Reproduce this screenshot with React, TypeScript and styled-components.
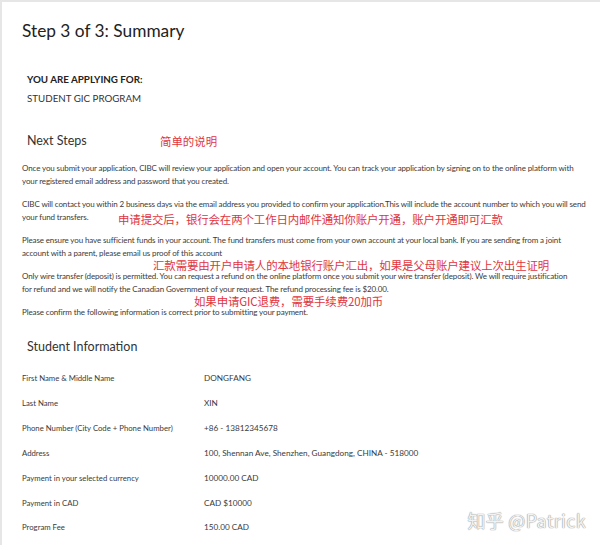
import styled, { createGlobalStyle } from "styled-components";

const GlobalStyle = createGlobalStyle`
  html, body {
    margin: 0;
    padding: 0;
    background: #ffffff;
  }
  body {
    font-family: Lato, "Noto Sans CJK SC", sans-serif;
    color: #3a3a3a;
  }
`;

const Page = styled.div`
  position: relative;
  width: 600px;
  height: 545px;
  box-sizing: border-box;
  overflow: hidden;
  border-top: 2px solid #e6e6e6;
  border-left: 2px solid #e6e6e6;
  padding: 15px 0 0 20px;
`;

const Title = styled.h1`
  margin: 0;
  font-size: 17.3px;
  font-weight: 400;
  line-height: 28px;
  color: #222;
`;

const Applying = styled.div`
  margin: 28px 0 0 5px;
  display: flex;
  flex-direction: column;
  gap: 7px;
`;

const ApplyingLabel = styled.div`
  font-size: 9.8px;
  font-weight: 700;
  line-height: 12px;
  color: #222;
`;

const ApplyingValue = styled.div`
  font-size: 9.75px;
  line-height: 12px;
  color: #333;
`;

const SectionHead = styled.div<{ $top: number }>`
  margin: ${(p) => p.$top}px 0 0 5px;
  display: grid;
  grid-template-columns: 133px auto;
  align-items: center;
  font-size: 12.5px;
  line-height: 20px;
  color: #333;
`;

const Note = styled.span`
  font-family: "Noto Sans CJK SC", sans-serif;
  font-size: 11.45px;
  line-height: 14px;
  color: #e0353e;
  white-space: nowrap;
`;

const Body = styled.div`
  margin-top: 11px;
  width: 576px;
  display: flex;
  flex-direction: column;
  gap: 10px;
`;

const Para = styled.p`
  position: relative;
  margin: 0;
  font-size: 8px;
  letter-spacing: -0.12px;
  line-height: 13px;
  color: #3a3a3a;
`;

const OverNote = styled(Note)<{ $left: number; $top: number }>`
  position: absolute;
  left: ${(p) => p.$left}px;
  top: ${(p) => p.$top}px;
`;

const Rows = styled.div`
  margin-top: 9px;
  display: flex;
  flex-direction: column;
`;

const Row = styled.div`
  display: grid;
  grid-template-columns: 182px 1fr;
  height: 24.85px;
  align-items: center;
  color: #3a3a3a;
`;

const Label = styled.span`
  font-size: 7.75px;
`;

const Value = styled.span`
  font-size: 8.2px;
`;

const Watermark = styled.div`
  position: absolute;
  right: 14px;
  bottom: 12px;
  font-family: "Noto Sans CJK SC", sans-serif;
  font-size: 18px;
  color: #f2f2f2;
  text-shadow: 0 0 1px #8f8f8f, 0 0 1px #9a9a9a;
  letter-spacing: 0.3px;
`;

const rows: [string, string][] = [
  ["First Name & Middle Name", "DONGFANG"],
  ["Last Name", "XIN"],
  ["Phone Number (City Code + Phone Number)", "+86 - 13812345678"],
  ["Address", "100, Shennan Ave, Shenzhen, Guangdong, CHINA - 518000"],
  ["Payment in your selected currency", "10000.00 CAD"],
  ["Payment in CAD", "CAD $10000"],
  ["Program Fee", "150.00 CAD"],
];

export default function App() {
  return (
    <Page>
      <GlobalStyle />
      <Title>Step 3 of 3: Summary</Title>
      <Applying>
        <ApplyingLabel>YOU ARE APPLYING FOR:</ApplyingLabel>
        <ApplyingValue>STUDENT GIC PROGRAM</ApplyingValue>
      </Applying>

      <SectionHead $top={27}>
        <span>Next Steps</span>
        <Note>简单的说明</Note>
      </SectionHead>

      <Body>
        <Para>
          Once you submit your application, CIBC will review your application and open your
          account. You can track your application by signing on to the online platform with
          <br />
          your registered email address and password that you created.
        </Para>
        <Para>
          CIBC will contact you within 2 business days via the email address you provided to
          confirm your application.This will include the account number to which you will send
          <br />
          your fund transfers.
          <OverNote $left={96} $top={14}>
            申请提交后，银行会在两个工作日内邮件通知你账户开通，账户开通即可汇款
          </OverNote>
        </Para>
        <Para>
          Please ensure you have sufficient funds in your account. The fund transfers must come
          from your own account at your local bank. If you are sending from a joint
          <br />
          account with a parent, please email us proof of this account
          <OverNote $left={131} $top={24}>
            汇款需要由开户申请人的本地银行账户汇出，如果是父母账户建议上次出生证明
          </OverNote>
        </Para>
        <Para>
          Only wire transfer (deposit) is permitted. You can request a refund on the online
          platform once you submit your wire transfer (deposit). We will require justification
          <br />
          for refund and we will notify the Canadian Government of your request. The refund
          processing fee is $20.00.
          <OverNote $left={172} $top={24}>
            如果申请GIC退费，需要手续费20加币
          </OverNote>
        </Para>
        <Para>Please confirm the following information is correct prior to submitting your payment.</Para>
      </Body>

      <SectionHead $top={18}>
        <span>Student Information</span>
      </SectionHead>

      <Rows>
        {rows.map(([label, value]) => (
          <Row key={label}>
            <Label>{label}</Label>
            <Value>{value}</Value>
          </Row>
        ))}
      </Rows>

      <Watermark>知乎 @Patrick</Watermark>
    </Page>
  );
}
